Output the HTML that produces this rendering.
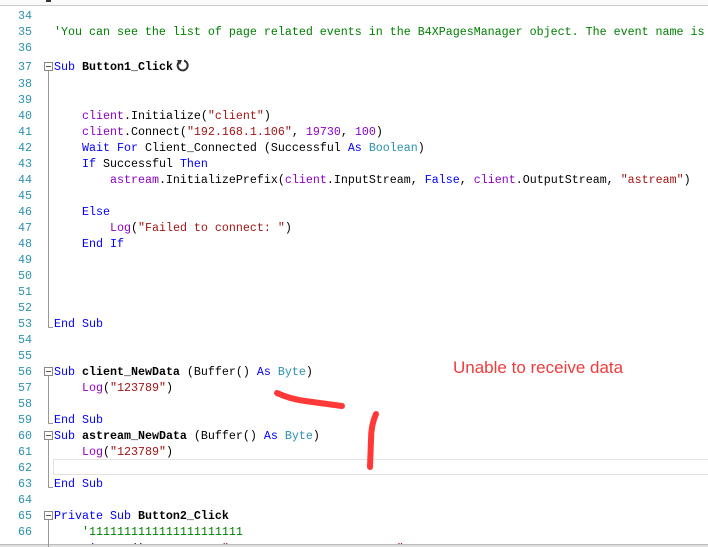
<!DOCTYPE html>
<html><head><meta charset="utf-8"><style>
html,body{margin:0;padding:0;width:708px;height:547px;overflow:hidden;background:#fff;position:relative}
.l{position:absolute;left:0;height:16px;line-height:16px;white-space:pre;font-family:"Liberation Mono",monospace;font-size:11.67px;color:#000}
.n{position:absolute;left:0;width:32px;text-align:right;color:#2b91af}
.c{position:absolute;left:54px}
.k{color:#0000ff}.g{color:#008000}.p{color:#8b00c8}.s{color:#a31515}.t{color:#2b91af}.b{font-weight:bold}
.fb{position:absolute;width:7px;height:7px;border:1px solid #888;background:#fff;left:44px}
.fb:after{content:"";position:absolute;left:1px;top:3px;width:5px;height:1px;background:#555}
.fl{position:absolute;left:48px;width:1px;background:#999}
.ft{position:absolute;left:48px;width:5px;height:1px;background:#999}
</style></head><body>
<div style="position:absolute;left:0;top:0;width:708px;height:5px;border-bottom:1px solid #ccc;background:#fafafa"></div>
<div style="position:absolute;left:46px;top:0;width:5px;height:2px;background:#333"></div>
<div style="position:absolute;left:53px;top:459px;width:660px;height:14px;border:1px solid #e2e2e2"></div>

<div class="l" style="top:8px"><span class="n">34</span></div>
<div class="l" style="top:24px"><span class="n">35</span><span class="c g">'You can see the list of page related events in the B4XPagesManager object. The event name is</span></div>
<div class="l" style="top:40px"><span class="n">36</span></div>
<div class="l" style="top:59px"><span class="n">37</span><span class="c"><span class="k">Sub</span> <span class="b">Button1_Click</span></span></div>
<svg style="position:absolute;left:175px;top:58px" width="15" height="15" viewBox="0 0 15 15"><path d="M4 4 A5 5 0 1 0 9 2.6" fill="none" stroke="#333" stroke-width="2"/><path d="M2 2 L7 2 L5 7 Z" fill="#333"/></svg>
<div class="l" style="top:76px"><span class="n">38</span></div>
<div class="l" style="top:92px"><span class="n">39</span></div>
<div class="l" style="top:108px"><span class="n">40</span><span class="c">    <span class="p">client</span>.Initialize(<span class="s">"client"</span>)</span></div>
<div class="l" style="top:124px"><span class="n">41</span><span class="c">    <span class="p">client</span>.Connect(<span class="s">"192.168.1.106"</span>, <span class="p">19730</span>, <span class="p">100</span>)</span></div>
<div class="l" style="top:140px"><span class="n">42</span><span class="c">    <span class="k">Wait For</span> Client_Connected (Successful <span class="k">As</span> <span class="t">Boolean</span>)</span></div>
<div class="l" style="top:156px"><span class="n">43</span><span class="c">    <span class="k">If</span> Successful <span class="k">Then</span></span></div>
<div class="l" style="top:172px"><span class="n">44</span><span class="c">        <span class="p">astream</span>.InitializePrefix(<span class="p">client</span>.InputStream, <span class="k">False</span>, <span class="p">client</span>.OutputStream, <span class="s">"astream"</span>)</span></div>
<div class="l" style="top:188px"><span class="n">45</span></div>
<div class="l" style="top:204px"><span class="n">46</span><span class="c">    <span class="k">Else</span></span></div>
<div class="l" style="top:220px"><span class="n">47</span><span class="c">        <span class="p">Log</span>(<span class="s">"Failed to connect: "</span>)</span></div>
<div class="l" style="top:236px"><span class="n">48</span><span class="c">    <span class="k">End If</span></span></div>
<div class="l" style="top:252px"><span class="n">49</span></div>
<div class="l" style="top:268px"><span class="n">50</span></div>
<div class="l" style="top:284px"><span class="n">51</span></div>
<div class="l" style="top:300px"><span class="n">52</span></div>
<div class="l" style="top:316px"><span class="n">53</span><span class="c k">End Sub</span></div>
<div class="l" style="top:332px"><span class="n">54</span></div>
<div class="l" style="top:348px"><span class="n">55</span></div>
<div class="l" style="top:364px"><span class="n">56</span><span class="c"><span class="k">Sub</span> <span class="b">client_NewData</span> (Buffer() <span class="k">As</span> <span class="t">Byte</span>)</span></div>
<div class="l" style="top:380px"><span class="n">57</span><span class="c">    <span class="p">Log</span>(<span class="s">"123789"</span>)</span></div>
<div class="l" style="top:396px"><span class="n">58</span></div>
<div class="l" style="top:412px"><span class="n">59</span><span class="c k">End Sub</span></div>
<div class="l" style="top:428px"><span class="n">60</span><span class="c"><span class="k">Sub</span> <span class="b">astream_NewData</span> (Buffer() <span class="k">As</span> <span class="t">Byte</span>)</span></div>
<div class="l" style="top:444px"><span class="n">61</span><span class="c">    <span class="p">Log</span>(<span class="s">"123789"</span>)</span></div>
<div class="l" style="top:460px"><span class="n">62</span></div>
<div class="l" style="top:476px"><span class="n">63</span><span class="c k">End Sub</span></div>
<div class="l" style="top:492px"><span class="n">64</span></div>
<div class="l" style="top:508px"><span class="n">65</span><span class="c"><span class="k">Private Sub</span> <span class="b">Button2_Click</span></span></div>
<div class="l" style="top:524px"><span class="n">66</span><span class="c g">    '1111111111111111111111</span></div>
<div class="l" style="top:541px"><span class="n">67</span><span class="c">    <span class="k">Dim</span> Str() <span class="k">As</span> <span class="t">Byte</span> = <span class="s">"AAAAAAAAAAAAAAAEEEEEEEEE"</span></span></div>
<div style="position:absolute;left:0;top:544px;width:708px;height:3px;background:#e0e0e0;border-top:1px solid #bbb"></div>

<div class="fb" style="top:62px"></div><div class="fl" style="top:71px;height:257px"></div><div class="ft" style="top:327px"></div>
<div class="fb" style="top:367px"></div><div class="fl" style="top:376px;height:47px"></div><div class="ft" style="top:423px"></div>
<div class="fb" style="top:431px"></div><div class="fl" style="top:440px;height:47px"></div><div class="ft" style="top:487px"></div>
<div class="fb" style="top:511px"></div><div class="fl" style="top:520px;height:30px"></div>

<div style="position:absolute;left:453px;top:358px;font-family:'Liberation Sans',sans-serif;font-size:17px;color:#f03c3c">Unable to receive data</div>
<svg style="position:absolute;left:0;top:0" width="708" height="547"><path d="M277 393 Q290 399 305 401 T342 406" fill="none" stroke="#ff3838" stroke-width="6" stroke-linecap="round"/><path d="M376 414 Q371 425 371 440 L370 467" fill="none" stroke="#ff3838" stroke-width="6" stroke-linecap="round"/></svg>
</body></html>
